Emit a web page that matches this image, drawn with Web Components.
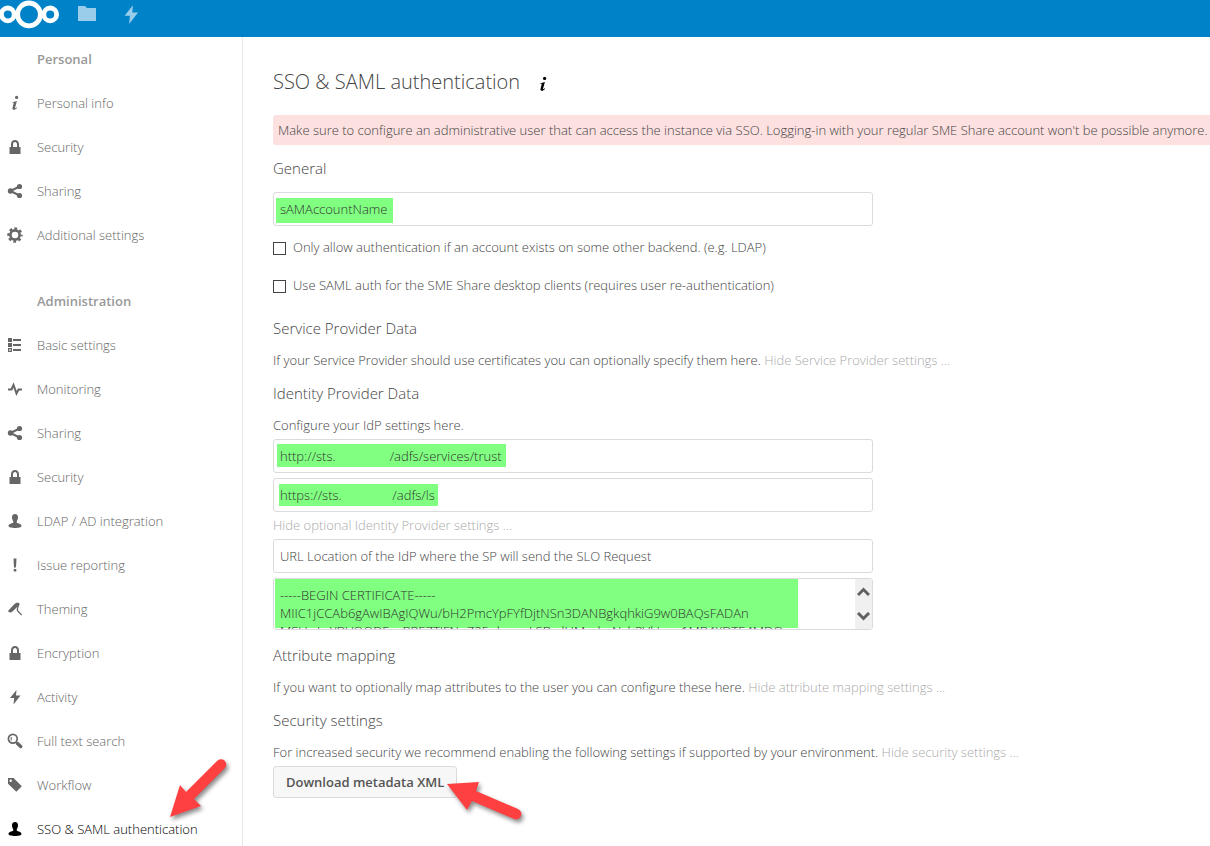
<!DOCTYPE html>
<html lang="en">
<head>
<meta charset="utf-8">
<title>SSO &amp; SAML authentication</title>
<style>
    body {
        margin: 0;
        background: #fff;
        color: #444;
        font: 300 13px/17px "Open Sans", "Noto Sans", sans-serif;
    }
</style>
</head>
<body>

<settings-app>
    <app-header slot="header"></app-header>

    <settings-nav slot="nav">
        <nav-group label="Personal">
            <nav-item icon="info">Personal info</nav-item>
            <nav-item icon="lock">Security</nav-item>
            <nav-item icon="share">Sharing</nav-item>
            <nav-item icon="gear">Additional settings</nav-item>
        </nav-group>
        <nav-group label="Administration">
            <nav-item icon="list">Basic settings</nav-item>
            <nav-item icon="pulse">Monitoring</nav-item>
            <nav-item icon="share">Sharing</nav-item>
            <nav-item icon="lock">Security</nav-item>
            <nav-item icon="user">LDAP / AD integration</nav-item>
            <nav-item icon="alert">Issue reporting</nav-item>
            <nav-item icon="roller">Theming</nav-item>
            <nav-item icon="lock">Encryption</nav-item>
            <nav-item icon="bolt">Activity</nav-item>
            <nav-item icon="search">Full text search</nav-item>
            <nav-item icon="tag">Workflow</nav-item>
            <nav-item icon="user" active>SSO &amp; SAML authentication<pointer-arrow slot="note" kind="down"></pointer-arrow></nav-item>
        </nav-group>
    </settings-nav>

    <page-title>SSO &amp; SAML authentication</page-title>
    <warning-box>Make sure to configure an administrative user that can access the instance via SSO. Logging-in with your regular SME Share account won't be possible anymore.</warning-box>

    <settings-section label="General">
        <text-field label="UID attribute" value="sAMAccountName" style="--mark-pos: 2px 5px; --mark-size: 117px 25px"></text-field>
        <div slot="checks">
            <check-row>Only allow authentication if an account exists on some other backend. (e.g. LDAP)</check-row>
            <check-row>Use SAML auth for the SME Share desktop clients (requires user re-authentication)</check-row>
        </div>
    </settings-section>

    <settings-section label="Service Provider Data">
        <hint-text toggle="Hide Service Provider settings ...">If your Service Provider should use certificates you can optionally specify them here.</hint-text>
    </settings-section>

    <settings-section label="Identity Provider Data">
        <hint-text>Configure your IdP settings here.</hint-text>
        <text-field label="Identifier of the IdP entity" value="http://sts.                /adfs/services/trust" style="--mark-pos: 3px 4px; --mark-size: 229px 23px"></text-field>
        <text-field label="URL target of the IdP" value="https://sts.               /adfs/ls" style="--mark-pos: 5px 5px; --mark-size: 159px 22px"></text-field>
        <hint-text toggle="Hide optional Identity Provider settings ..."></hint-text>
        <text-field label="SLO URL" placeholder="URL Location of the IdP where the SP will send the SLO Request"></text-field>
        <cert-field></cert-field>
    </settings-section>

    <settings-section label="Attribute mapping">
        <hint-text toggle="Hide attribute mapping settings ...">If you want to optionally map attributes to the user you can configure these here.</hint-text>
    </settings-section>

    <settings-section label="Security settings">
        <hint-text toggle="Hide security settings ...">For increased security we recommend enabling the following settings if supported by your environment.</hint-text>
        <push-button>Download metadata XML<pointer-arrow slot="note" kind="left"></pointer-arrow></push-button>
    </settings-section>
</settings-app>

<script>
const icons = {
    info: '<circle cx="9.6" cy="2.4" r="1.6"/><path d="M5.6 7.2 9.9 5.9 8.1 12.6c-.2.8.3.8 1.7-.4l.4.5C8.600 14.900 5 15.900 5.500 13l1.300-5.200-1.300.1z"/>',
    lock: '<path d="M8 1C5.500 1 4 2.900 4 5.300V8H2.500v7h11V8H12V5.300C12 2.900 10.500 1 8 1zm0 2c1.300 0 2 1 2 2.300V8H6V5.300C6 4 6.700 3 8 3z"/>',
    share: '<path d="M3.500 8 12.500 3.500M3.500 8l9 4.500" stroke="currentColor" stroke-width="2"/><circle cx="3.500" cy="8" r="2.700"/><circle cx="12.500" cy="3.500" r="2.600"/><circle cx="12.500" cy="12.500" r="2.600"/>',
    gear: '<circle cx="8" cy="8" r="4.600" fill="none" stroke="currentColor" stroke-width="2.600"/><circle cx="8" cy="8" r="6.500" fill="none" stroke="currentColor" stroke-width="2.400" stroke-dasharray="2.700 2.405" stroke-dashoffset="1.350"/>',
    list: '<path d="M1 1h4v4H1zm0 5h4v4H1zm0 5h4v4H1zm1.200 1.200v1.600h1.600v-1.600zM6 2h8v2H6zm0 5h8v2H6zm0 5h8v2H6z" fill-rule="evenodd"/>',
    pulse: '<path d="M1 8.500h3.500L6.500 4l3 8.500 2-4H15" fill="none" stroke="currentColor" stroke-width="2"/>',
    user: '<path d="M8 1C6 1 4.900 2.400 5 4.500c0 2 .8 2.700 1.200 3.500v1.800C5 10.500 1.500 10.800 1.500 13c0 1.300 3 2 6.500 2s6.500-.7 6.500-2c0-2.200-3.500-2.500-4.700-3.200V8c.4-.8 1.200-1.500 1.200-3.500C11.100 2.400 10 1 8 1z"/>',
    alert: '<path d="M6.500 1.500h3L9 10.500H7zM6.700 12h2.600v2.600H6.700z"/>',
    roller: '<path d="m1.200 9.800 6.500-7 2.600-1.300 1.700.6.300 1.900-7.400 7.100c-1.600.8-3.700.4-3.700-1.300z"/><path d="m12 2.500-1.200 3.800c-.6 1.500-1 2.700.2 4l3.700 3.800" fill="none" stroke="currentColor" stroke-width="1.300"/>',
    bolt: '<path d="M9.500 1 3 9h4.200L6.500 15.500 13.500 6.500H9z"/>',
    search: '<circle cx="5.800" cy="5.800" r="4.400" fill="none" stroke="currentColor" stroke-width="1.700"/><path d="M4.200 4v3.500" stroke="currentColor"/><path d="m10.500 10.500 3.200 3" stroke="currentColor" stroke-width="3.400" stroke-linecap="round"/>',
    tag: '<path d="M1 1h5.500l8.300 8.300-5.500 5.500L1 6.700zm2.700 1.500a1.200 1.200 0 1 0 0 2.400 1.200 1.200 0 0 0 0-2.400z" fill-rule="evenodd"/>',
    folder: '<path d="M0 1h7l2 2h9v13H0z" />'
};

// Small base class: every element only has to return its markup
class BaseElement extends HTMLElement {

    constructor() {
        super();
        this.shadow = this.attachShadow({ mode: 'open' });
    }

    connectedCallback() {
        this.render();
    }

    attr(name) {
        return this.getAttribute(name) || '';
    }

    render() {
        this.shadow.innerHTML = this.template();
    }
}

class SettingsApp extends BaseElement {
    template() {
        return `
        <style>
        :host {
            display: grid;
            grid-template: auto minmax(0, 1fr) / 243px minmax(0, 1fr);
            height: 100vh;
            overflow: hidden;
        }
        slot[name="header"] {
            display: block;
            grid-column: 1 / 3;
        }
        slot[name="nav"] {
            display: block;
            min-height: 0;
        }
        main {
            padding: 30px 0 0 30px;
            overflow-y: auto;
            scrollbar-width: none;
        }
        </style>
        <slot name="header"></slot>
        <slot name="nav"></slot>
        <main><slot></slot></main>
        `;
    }
}

class AppHeader extends BaseElement {
    template() {
        return `
        <style>
        :host {
            display: flex;
            align-items: flex-start;
            height: 37px;
            background: #0082c9;
        }
        a {
            display: block;
            color: #fff;
        }
        svg {
            display: block;
            fill: currentColor;
        }
        .app {
            opacity: 0.6;
            padding: 5px 13px;
        }
        .apps {
            display: flex;
            padding-left: 5px;
        }
        </style>
        <a href="#" aria-label="Home">
            <svg width="60" height="30" viewBox="0 0 60 30">
                <g style="fill: none; stroke: #fff; stroke-width: 4.800">
                    <circle cx="29" cy="14.400" r="11.400"/>
                    <circle cx="7.800" cy="14.400" r="6.400"/>
                    <circle cx="50.200" cy="14.400" r="6.400"/>
                </g>
            </svg>
        </a>
        <div class="apps">
            <a class="app" href="#" aria-label="Files"><svg width="18" height="18" viewBox="0 0 18 18">${icons.folder}</svg></a>
            <a class="app" href="#" aria-label="Activity"><svg width="18" height="20" viewBox="1 1 14 15">${icons.bolt}</svg></a>
        </div>
        `;
    }
}

class SettingsNav extends BaseElement {
    template() {
        return `
        <style>
        :host {
            display: block;
            box-sizing: border-box;
            height: 100%;
            border-right: 1px solid #e6e6e6;
            overflow-y: auto;
            scrollbar-width: none;
        }
        nav {
            display: grid;
            gap: 22px;
        }
        </style>
        <nav><slot></slot></nav>
        `;
    }
}

class NavGroup extends BaseElement {
    template() {
        return `
        <style>
        :host { display: block; }
        h2 {
            margin: 0;
            padding-left: 37px;
            font-size: 13px;
            font-weight: 600;
            line-height: 44px;
            color: #999;
        }
        </style>
        <h2>${this.attr('label')}</h2>
        <slot></slot>
        `;
    }
}

class NavItem extends BaseElement {
    template() {
        return `
        <style>
        :host {
            display: block;
            position: relative;
            color: #666;
        }
        :host([active]) { color: #000; }
        a {
            display: flex;
            align-items: center;
            gap: 14px;
            height: 44px;
            padding-left: 7px;
            color: inherit;
            text-decoration: none;
        }
        svg { fill: currentColor; }
        </style>
        <a href="#"><svg width="16" height="16" viewBox="0 0 16 16">${icons[this.attr('icon')]}</svg><span><slot></slot></span></a>
        <slot name="note"></slot>
        `;
    }
}

class PageTitle extends BaseElement {
    template() {
        return `
        <style>
        :host {
            display: flex;
            align-items: center;
            gap: 15px;
            margin-bottom: 18px;
        }
        h1 {
            margin: 0;
            font-size: 20px;
            font-weight: 300;
            line-height: 30px;
        }
        a {
            display: block;
            padding-top: 4px;
            color: #000;
        }
        svg {
            display: block;
            fill: currentColor;
        }
        </style>
        <h1><slot></slot></h1>
        <a href="#" aria-label="Documentation"><svg width="16" height="16" viewBox="0 0 16 16">${icons.info}</svg></a>
        `;
    }
}

class WarningBox extends BaseElement {
    template() {
        return `
        <style>
        :host {
            display: block;
            padding: 5px;
            line-height: 20px;
            background: #fde0e0;
            border-radius: 3px 0 0 3px;
            white-space: nowrap;
        }
        </style>
        <slot></slot>
        `;
    }
}

class SettingsSection extends BaseElement {
    template() {
        return `
        <style>
        :host {
            display: block;
            padding-bottom: 1px;
        }
        h2 {
            margin: 0;
            padding: 12px 0 13px;
            font-size: 15px;
            font-weight: 300;
            line-height: 22px;
        }
        .fields {
            display: grid;
            gap: 5px;
            justify-items: start;
        }
        ::slotted([slot="checks"]) {
            display: grid;
            padding-top: 2px;
        }
        </style>
        <h2>${this.attr('label')}</h2>
        <div class="fields"><slot></slot></div>
        <slot name="checks"></slot>
        `;
    }
}

class HintText extends BaseElement {
    template() {
        const toggle = this.attr('toggle');
        return `
        <style>
        :host { display: block; }
        a {
            color: #aaa;
            text-decoration: none;
        }
        </style>
        <slot></slot>
        ${toggle ? `<a href="#">${toggle}</a>` : ''}
        `;
    }
}

class TextField extends BaseElement {
    template() {
        return `
        <style>
        :host {
            display: block;
            width: 600px;
            max-width: 100%;
        }
        input {
            display: block;
            box-sizing: border-box;
            width: 100%;
            height: 34px;
            margin: 0;
            padding: 0 6px;
            border: 1px solid #dbdbdb;
            border-radius: 3px;
            background: linear-gradient(#80ff80, #80ff80) var(--mark-pos, 0 0) / var(--mark-size, 0 0) no-repeat #fff;
            color: #333;
            font: inherit;
        }
        input::placeholder { color: #444; }
        </style>
        <input type="text" aria-label="${this.attr('label')}" value="${this.attr('value')}" placeholder="${this.attr('placeholder')}">
        `;
    }
}

class CertField extends BaseElement {
    template() {
        return `
        <style>
        :host {
            display: flex;
            box-sizing: border-box;
            width: 600px;
            max-width: 100%;
            height: 52px;
            margin-bottom: 1px;
            border: 1px solid #dbdbdb;
            border-radius: 3px;
            overflow: hidden;
        }
        textarea {
            flex: 1;
            min-width: 0;
            box-sizing: border-box;
            margin: 0;
            padding: 7px 6px 0;
            border: 0;
            background: linear-gradient(#80ff80, #80ff80) 1px 0 / 523px 49px no-repeat #fff;
            color: #333;
            font: inherit;
            line-height: 18px;
            resize: none;
            overflow: hidden;
            white-space: pre;
        }
        .bar {
            display: flex;
            flex-direction: column;
            width: 17px;
            background: #f0f0f0;
        }
        button {
            flex: 1;
            display: grid;
            place-items: center;
            padding: 0;
            border: 0;
            background: none;
        }
        path {
            fill: none;
            stroke: #606060;
            stroke-width: 3;
        }
        </style>
        <textarea aria-label="Public X.509 certificate of the IdP">-----BEGIN CERTIFICATE-----
MIIC1jCCAb6gAwIBAgIQWu/bH2PmcYpFYfDjtNSn3DANBgkqhkiG9w0BAQsFADAn
MSUwIwYDVQQDExxBREZTIFNpZ25pbmcgLSBzdHMudmNsb3VkLmx1MB4XDTE4MDQw</textarea>
        <div class="bar">
            <button type="button" aria-label="Scroll up"><svg width="13" height="10" viewBox="0 0 13 10"><path d="m1 8 5.500-5.500L12 8"/></svg></button>
            <button type="button" aria-label="Scroll down"><svg width="13" height="10" viewBox="0 0 13 10"><path d="m1 1 5.500 5.500L12 1"/></svg></button>
        </div>
        `;
    }
}

class CheckRow extends BaseElement {
    template() {
        return `
        <style>
        :host { display: block; }
        label {
            display: flex;
            align-items: center;
            gap: 7px;
            height: 38px;
        }
        input {
            appearance: none;
            box-sizing: border-box;
            width: 13px;
            height: 13px;
            margin: 2px 0 0;
            border: 1px solid #444;
            background: #fff;
        }
        </style>
        <label><input type="checkbox"><span><slot></slot></span></label>
        `;
    }
}

class PushButton extends BaseElement {
    template() {
        return `
        <style>
        :host {
            display: block;
            position: relative;
        }
        button {
            display: block;
            height: 32px;
            padding: 0 12px;
            border: 1px solid #dbdbdb;
            border-radius: 3px;
            background: #f7f7f7;
            color: #555;
            font: inherit;
            font-weight: 600;
        }
        </style>
        <button type="button"><slot></slot></button>
        <slot name="note"></slot>
        `;
    }
}

// Red arrow laid over the element it is slotted into
class PointerArrow extends BaseElement {
    template() {
        const down = this.attr('kind') === 'down';
        const shape = down
            ? '<path d="M5 60 15 28l6 7 31-31a5 5 0 0 1 8 7L29 42l7 7z"/>'
            : '<path d="M4 6 36 4l-3 9 42 18a5 5 0 0 1-4 10L29 23l-5 9z"/>';
        return `
        <style>
        :host {
            position: absolute;
            pointer-events: none;
            z-index: 1;
        }
        :host([kind="down"]) {
            left: 165px;
            top: -50px;
        }
        :host([kind="left"]) {
            left: 170px;
            top: 12px;
        }
        svg {
            display: block;
            fill: #ff4040;
            filter: drop-shadow(2px 3px 2px rgba(0, 0, 0, 0.45));
        }
        </style>
        <svg width="84" height="68" viewBox="0 0 84 68">${shape}</svg>
        `;
    }
}

customElements.define('settings-app', SettingsApp);
customElements.define('app-header', AppHeader);
customElements.define('settings-nav', SettingsNav);
customElements.define('nav-group', NavGroup);
customElements.define('nav-item', NavItem);
customElements.define('page-title', PageTitle);
customElements.define('warning-box', WarningBox);
customElements.define('settings-section', SettingsSection);
customElements.define('hint-text', HintText);
customElements.define('text-field', TextField);
customElements.define('cert-field', CertField);
customElements.define('check-row', CheckRow);
customElements.define('push-button', PushButton);
customElements.define('pointer-arrow', PointerArrow);
</script>
</body>
</html>
